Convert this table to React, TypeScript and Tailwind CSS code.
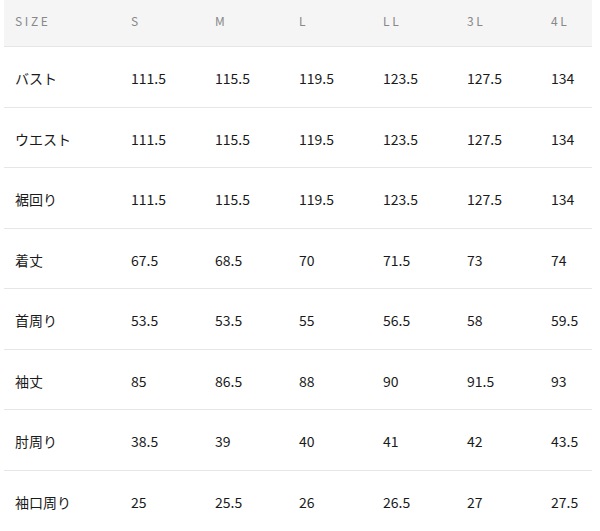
const SIZES = ['S', 'M', 'L', 'LL', '3L', '4L'];

const ROWS: { label: string; values: string[] }[] = [
  { label: 'バスト', values: ['111.5', '115.5', '119.5', '123.5', '127.5', '134'] },
  { label: 'ウエスト', values: ['111.5', '115.5', '119.5', '123.5', '127.5', '134'] },
  { label: '裾回り', values: ['111.5', '115.5', '119.5', '123.5', '127.5', '134'] },
  { label: '着丈', values: ['67.5', '68.5', '70', '71.5', '73', '74'] },
  { label: '首周り', values: ['53.5', '53.5', '55', '56.5', '58', '59.5'] },
  { label: '袖丈', values: ['85', '86.5', '88', '90', '91.5', '93'] },
  { label: '肘周り', values: ['38.5', '39', '40', '41', '42', '43.5'] },
  { label: '袖口周り', values: ['25', '25.5', '26', '26.5', '27', '27.5'] },
];

const cols = 'grid grid-cols-[116px_84px_84px_84px_84px_84px_1fr]';

export default function App() {
  return (
    <div
      className="w-[600px] h-[531px] bg-white overflow-hidden"
      style={{ fontFamily: '"Noto Sans CJK JP", "Noto Sans", sans-serif' }}
    >
      <div className="ml-[4px] w-[588px]">
        {/* ヘッダー */}
        <div className={`${cols} h-[47px] items-center pb-[4px] bg-[#f5f5f5] border-b border-[#e6e6e6] text-[12px] tracking-[0.22em] text-[#888]`}>
          <span className="pl-[11px]">SIZE</span>
          {SIZES.map((s) => (
            <span key={s} className="pl-[11px]">{s}</span>
          ))}
        </div>

        {/* 本体 */}
        {ROWS.map((row, i) => (
          <div
            key={row.label}
            className={`${cols} h-[60.5px] items-center pt-[4px] text-[14px] text-[#1a1a1a] ${i < ROWS.length - 1 ? 'border-b border-[#e6e6e6]' : ''}`}
          >
            <span className="pl-[11px]">{row.label}</span>
            {row.values.map((v, j) => (
              <span key={j} className="pl-[11px]">{v}</span>
            ))}
          </div>
        ))}
      </div>
    </div>
  );
}
